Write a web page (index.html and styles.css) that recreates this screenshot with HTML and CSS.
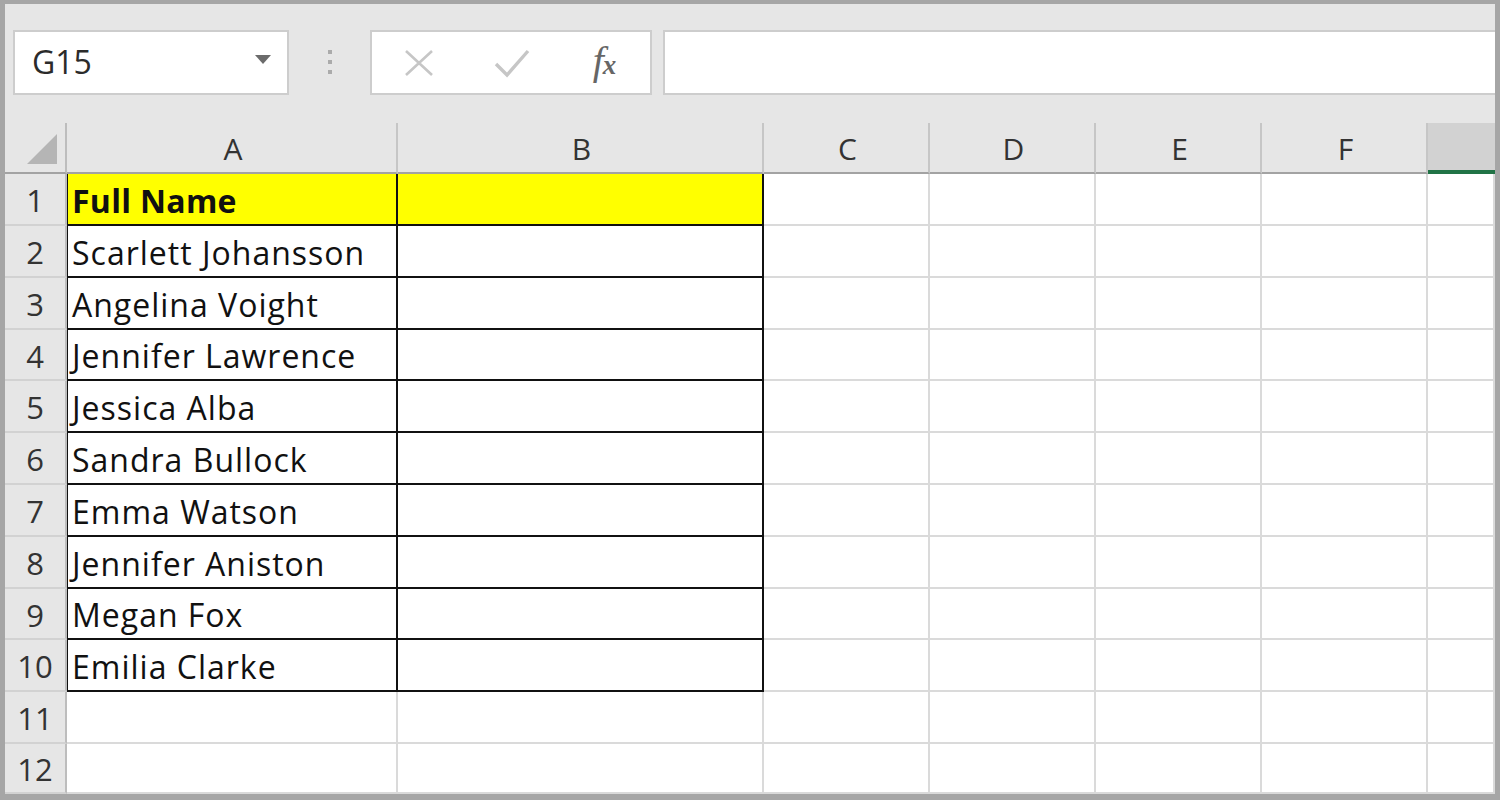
FILE: index.html
```html
<!DOCTYPE html>
<html>
<head>
<meta charset="utf-8">
<title>Sheet</title>
<link rel="stylesheet" href="styles.css">
</head>
<body>
<div class="frame">
  <div class="toolbar">
    <div class="namebox">
      <span class="ref">G15</span>
      <svg class="caret" width="16" height="9" viewBox="0 0 16 9"><polygon points="0,0 16,0 8,9" fill="#6b6b6b"/></svg>
    </div>
    <div class="grip"><i></i><i></i><i></i></div>
    <div class="fbtns">
      <div class="slot s1"><svg width="30" height="28" viewBox="0 0 30 28"><path d="M2 2 L28 26 M28 2 L2 26" stroke="#c6c6c6" stroke-width="2.6" fill="none"/></svg></div>
      <div class="slot s2"><svg width="36" height="30" viewBox="0 0 36 30"><path d="M2 16 L13 27 L34 3" stroke="#c6c6c6" stroke-width="3.4" fill="none"/></svg></div>
      <div class="slot s3"><span class="fx"><span class="f">f</span><span class="x">x</span></span></div>
    </div>
    <div class="finput"></div>
  </div>
  <div class="sheet">
    <div class="corner"><svg width="30" height="30" viewBox="0 0 30 30"><polygon points="30,0 30,30 0,30" fill="#b5b5b5"/></svg></div>
    <div class="ch">A</div><div class="ch">B</div><div class="ch">C</div><div class="ch">D</div><div class="ch">E</div><div class="ch">F</div><div class="ch sel"></div>

    <div class="rh">1</div><div class="c t ta y b">Full Name</div><div class="c t y"></div><div class="c"></div><div class="c"></div><div class="c"></div><div class="c"></div><div class="c"></div>
    <div class="rh">2</div><div class="c t ta">Scarlett Johansson</div><div class="c t"></div><div class="c"></div><div class="c"></div><div class="c"></div><div class="c"></div><div class="c"></div>
    <div class="rh">3</div><div class="c t ta">Angelina Voight</div><div class="c t"></div><div class="c"></div><div class="c"></div><div class="c"></div><div class="c"></div><div class="c"></div>
    <div class="rh">4</div><div class="c t ta">Jennifer Lawrence</div><div class="c t"></div><div class="c"></div><div class="c"></div><div class="c"></div><div class="c"></div><div class="c"></div>
    <div class="rh">5</div><div class="c t ta">Jessica Alba</div><div class="c t"></div><div class="c"></div><div class="c"></div><div class="c"></div><div class="c"></div><div class="c"></div>
    <div class="rh">6</div><div class="c t ta">Sandra Bullock</div><div class="c t"></div><div class="c"></div><div class="c"></div><div class="c"></div><div class="c"></div><div class="c"></div>
    <div class="rh">7</div><div class="c t ta">Emma Watson</div><div class="c t"></div><div class="c"></div><div class="c"></div><div class="c"></div><div class="c"></div><div class="c"></div>
    <div class="rh">8</div><div class="c t ta">Jennifer Aniston</div><div class="c t"></div><div class="c"></div><div class="c"></div><div class="c"></div><div class="c"></div><div class="c"></div>
    <div class="rh">9</div><div class="c t ta">Megan Fox</div><div class="c t"></div><div class="c"></div><div class="c"></div><div class="c"></div><div class="c"></div><div class="c"></div>
    <div class="rh">10</div><div class="c t ta">Emilia Clarke</div><div class="c t"></div><div class="c"></div><div class="c"></div><div class="c"></div><div class="c"></div><div class="c"></div>
    <div class="rh">11</div><div class="c"></div><div class="c"></div><div class="c"></div><div class="c"></div><div class="c"></div><div class="c"></div><div class="c"></div>
    <div class="rh">12</div><div class="c"></div><div class="c"></div><div class="c"></div><div class="c"></div><div class="c"></div><div class="c"></div><div class="c"></div>
  </div>
</div>
</body>
</html>
```

FILE: styles.css
```css
* { box-sizing: border-box; }
html, body { margin: 0; padding: 0; }
body {
  width: 1500px;
  height: 800px;
  overflow: hidden;
  font-family: "Open Sans", "Noto Sans", sans-serif;
  color: #000;
}
.frame {
  width: 1500px;
  height: 800px;
  border-style: solid;
  border-color: #a6a6a6;
  border-width: 4px 5px 6px 5px;
  background: #e6e6e6;
  overflow: hidden;
  display: flex;
  flex-direction: column;
}
.toolbar {
  height: 119px;
  flex: none;
  display: flex;
  align-items: flex-start;
  padding: 26px 0 0 8px;
}
.namebox {
  width: 276px;
  height: 65px;
  background: #fff;
  border: 2px solid #cdcdcd;
  display: flex;
  align-items: center;
  justify-content: space-between;
  padding: 0 16px 0 17px;
}
.ref {
  font-size: 32px;
  color: #2b2b2b;
  line-height: 1;
  padding-bottom: 2px;
}
.caret { display: block; margin-top: -6px; }
.grip {
  width: 81px;
  height: 65px;
  display: flex;
  flex-direction: column;
  align-items: center;
  justify-content: center;
  gap: 6px;
  padding-bottom: 2px;
}
.grip i {
  display: block;
  width: 4px;
  height: 4px;
  background: #ababab;
}
.fbtns {
  width: 282px;
  height: 65px;
  background: #fff;
  border: 2px solid #cdcdcd;
  display: flex;
  align-items: center;
}
.slot {
  height: 100%;
  display: flex;
  align-items: center;
  justify-content: center;
}
.slot svg { display: block; }
.s1 { width: 93px; }
.s2 { width: 94px; }
.s3 { width: 91px; }
.fx {
  font-family: "Liberation Serif", "DejaVu Serif", serif;
  font-style: italic;
  color: #666;
  line-height: 1;
  display: flex;
  align-items: baseline;
  padding-bottom: 4px;
}
.fx .f { font-size: 40px; }
.fx .x { font-size: 27px; margin-left: -1px; font-weight: bold; }
.finput {
  flex: 1;
  height: 65px;
  margin-left: 11px;
  margin-right: -4px;
  background: #fff;
  border: 2px solid #cdcdcd;
}
.sheet {
  flex: 1;
  display: grid;
  grid-template-columns: 62px 331px 366px 166px 166px 166px 166px 1fr;
  grid-template-rows: 51px 52px 52px 52px 51px 52px 52px 52px 52px 51px 52px 52px 50px;
  background: #fff;
}
.corner {
  background: #e6e6e6;
  border-right: 2px solid #bdbdbd;
  border-bottom: 2px solid #a3a3a3;
  display: flex;
  align-items: flex-end;
  justify-content: flex-end;
  padding: 0 8px 8px 0;
}
.corner svg { display: block; }
.ch {
  background: #e6e6e6;
  border-right: 2px solid #c6c6c6;
  border-bottom: 2px solid #a3a3a3;
  display: flex;
  align-items: center;
  justify-content: center;
  font-size: 30px;
  color: #333;
  padding: 2px 0 0 3px;
}
.ch.sel {
  background: #d2d2d2;
  border-right: none;
  border-bottom: 4px solid #217346;
}
.rh {
  background: #e6e6e6;
  border-right: 2px solid #bdbdbd;
  border-bottom: 2px solid #d2d2d2;
  display: flex;
  align-items: center;
  justify-content: center;
  font-size: 31px;
  color: #333;
  padding-top: 2px;
}
.c {
  border-right: 2px solid #dadada;
  border-bottom: 2px solid #dadada;
  display: flex;
  align-items: center;
  font-size: 32px;
  letter-spacing: 1px;
  white-space: nowrap;
  overflow: hidden;
  color: #111;
  padding-top: 2px;
}
.c.t {
  border-right-color: #111;
  border-bottom-color: #111;
}
.c.ta {
  border-left: 1px solid #111;
  padding-left: 4px;
}
.c.y { background: #ffff00; }
.c.b { font-weight: bold; letter-spacing: 0.3px; }
```
